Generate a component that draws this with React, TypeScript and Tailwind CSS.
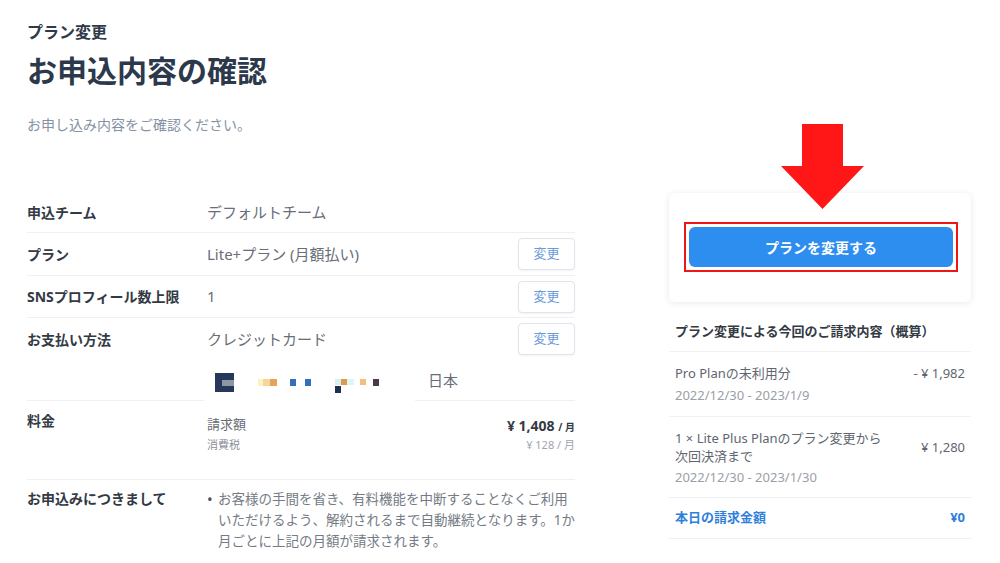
import React from "react";

function ChangeBtn() {
  return (
    <button className="w-[57px] h-[32px] shrink-0 rounded-[4px] border border-[#dfe5ec] bg-white text-[13px] text-[#6b9bdb] shadow-[0_1px_2px_rgba(0,0,0,0.05)]">
      変更
    </button>
  );
}

const squares: { x: number; y: number; w: number; h: number; c: string }[] = [
  { x: 8, y: 13, w: 19, h: 19, c: "#27385a" },
  { x: 15, y: 20, w: 12, h: 6, c: "#8d97a6" },
  { x: 51, y: 19, w: 5, h: 7, c: "#fdf0c4" },
  { x: 56, y: 19, w: 7, h: 7, c: "#f7d69e" },
  { x: 63, y: 19, w: 7, h: 7, c: "#e5a458" },
  { x: 83, y: 19, w: 6, h: 7, c: "#3271b9" },
  { x: 98, y: 19, w: 6, h: 7, c: "#3271b9" },
  { x: 128, y: 19, w: 6, h: 6, c: "#d6f1f5" },
  { x: 128, y: 26, w: 6, h: 7, c: "#1f2f52" },
  { x: 134, y: 19, w: 6, h: 6, c: "#dc9c4e" },
  { x: 140, y: 19, w: 7, h: 6, c: "#dff4f6" },
  { x: 153, y: 19, w: 6, h: 6, c: "#f2bf7e" },
  { x: 166, y: 19, w: 6, h: 7, c: "#4b3a4a" },
];

export default function App() {
  return (
    <div className="relative flex w-[1000px] h-[563px] overflow-hidden bg-white font-['Noto_Sans','Noto_Sans_CJK_JP',sans-serif]">
      {/* Left column */}
      <div className="ml-[27px] w-[548px] pt-[22px] shrink-0">
        <div className="text-[16px] leading-[20px] font-bold text-[#2f3a4b]">プラン変更</div>
        <h1 className="mt-[11px] text-[30px] leading-[36px] font-bold text-[#2c394b]">お申込内容の確認</h1>
        <p className="mt-[26px] text-[14px] leading-[20px] text-[#8592a3]">お申し込み内容をご確認ください。</p>

        <div className="mt-[57px]">
          {/* Row 1 */}
          <div className="flex items-center h-[41px] border-b border-[#eef0f3]">
            <div className="w-[180px] text-[14px] font-bold text-[#333a44]">申込チーム</div>
            <div className="flex-1 text-[15px] text-[#686e77]">デフォルトチーム</div>
          </div>
          {/* Row 2 */}
          <div className="flex items-center h-[43px] border-b border-[#eef0f3]">
            <div className="w-[180px] text-[14px] font-bold text-[#333a44]">プラン</div>
            <div className="flex-1 text-[15px] text-[#686e77]">Lite+プラン (月額払い)</div>
            <ChangeBtn />
          </div>
          {/* Row 3 */}
          <div className="flex items-center h-[42px] border-b border-[#eef0f3]">
            <div className="w-[180px] text-[14px] font-bold text-[#333a44] whitespace-nowrap">SNSプロフィール数上限</div>
            <div className="flex-1 text-[15px] text-[#686e77]">1</div>
            <ChangeBtn />
          </div>
          {/* Row 4 */}
          <div className="flex flex-col">
            <div className="flex items-center h-[42px]">
              <div className="w-[180px] text-[14px] font-bold text-[#333a44]">お支払い方法</div>
              <div className="flex-1 text-[15px] text-[#686e77]">クレジットカード</div>
              <ChangeBtn />
            </div>
            <div className="flex items-center h-[40px]">
              <div className="w-[180px]" />
              <div className="relative h-[40px] w-[210px]">
                {squares.map((s, i) => (
                  <div
                    key={i}
                    className="absolute"
                    style={{ left: s.x, top: s.y, width: s.w, height: s.h, background: s.c }}
                  />
                ))}
              </div>
              <div className="ml-[11px] text-[15px] text-[#686e77]">日本</div>
            </div>
            <div className="flex h-px">
              <div className="w-[177px] bg-[#eef0f3]" />
              <div className="w-[211px]" />
              <div className="flex-1 bg-[#eef0f3]" />
            </div>
          </div>
          {/* Row 5 */}
          <div className="flex items-start pt-[10px] pb-[26px] border-b border-[#eef0f3]">
            <div className="w-[180px] text-[14px] leading-[20px] font-bold text-[#333a44]">料金</div>
            <div className="flex-1 mt-[4px]">
              <div className="flex items-center justify-between h-[20px]">
                <span className="text-[13px] text-[#686e77]">請求額</span>
                <span className="text-[14px] font-bold text-[#333a44]">
                  ¥ 1,408 <span className="text-[10px]">/ 月</span>
                </span>
              </div>
              <div className="mt-[2px] flex items-center justify-between h-[16px]">
                <span className="text-[11px] text-[#8a9099]">消費税</span>
                <span className="text-[11px] text-[#a0a6ae]">¥ 128 / 月</span>
              </div>
            </div>
          </div>
          {/* Row 6 */}
          <div className="flex items-start pt-[9px]">
            <div className="w-[180px] text-[14px] leading-[20px] font-bold text-[#333a44]">お申込みにつきまして</div>
            <div className="flex-1 flex text-[13.5px] leading-[21px] text-[#747b85]">
              <span className="w-[13px] shrink-0 pl-[2px] text-[15px] text-[#4a5059]">•</span>
              <span className="whitespace-nowrap">
                お客様の手間を省き、有料機能を中断することなくご利用
                <br />
                いただけるよう、解約されるまで自動継続となります。1か
                <br />
                月ごとに上記の月額が請求されます。
              </span>
            </div>
          </div>
        </div>
      </div>

      {/* Right column */}
      <div className="ml-[94px] w-[302px] pt-[193px] shrink-0">
        <div className="rounded-[6px] bg-white shadow-[0_1px_7px_rgba(0,0,0,0.09)] pt-[29px] pb-[30px] pl-[15px] pr-[13px]">
          <div className="border-2 border-[#f01616] p-[3px]">
            <button className="w-full h-[40px] rounded-[6px] bg-[#2e8ef0] text-white text-[14px] font-bold">
              プランを変更する
            </button>
          </div>
        </div>

        <div className="mt-[19px]">
          <div className="px-[6px] pb-[10px] text-[13px] leading-[20px] font-bold text-[#333a44] border-b border-[#eef0f3]">
            プラン変更による今回のご請求内容（概算）
          </div>
          <div className="px-[6px] pt-[11px] pb-[11px] border-b border-[#eef0f3]">
            <div className="flex justify-between text-[13px] leading-[20px] text-[#5f6670]">
              <span>Pro Planの未利用分</span>
              <span>- ¥ 1,982</span>
            </div>
            <div className="mt-[2px] text-[13px] leading-[20px] text-[#9aa0a8]">2022/12/30 - 2023/1/9</div>
          </div>
          <div className="px-[6px] pt-[12px] pb-[10px] border-b border-[#eef0f3]">
            <div className="flex items-center justify-between text-[13px] leading-[18px] text-[#5f6670]">
              <span>
                1 × Lite Plus Planのプラン変更から
                <br />
                次回決済まで
              </span>
              <span>¥ 1,280</span>
            </div>
            <div className="text-[13px] leading-[20px] mt-[2px] text-[#9aa0a8]">2022/12/30 - 2023/1/30</div>
          </div>
          <div className="px-[6px] h-[41px] flex items-center justify-between border-b border-[#eef0f3] text-[13px] font-bold text-[#2f7fdb]">
            <span>本日の請求金額</span>
            <span>¥0</span>
          </div>
        </div>
      </div>

      {/* Annotation arrow */}
      <svg className="absolute left-[781px] top-[124px]" width="83" height="85" viewBox="0 0 83 85">
        <polygon points="21,0 62,0 62,42 83,42 41.5,85 0,42 21,42" fill="#ff1616" />
      </svg>
    </div>
  );
}
